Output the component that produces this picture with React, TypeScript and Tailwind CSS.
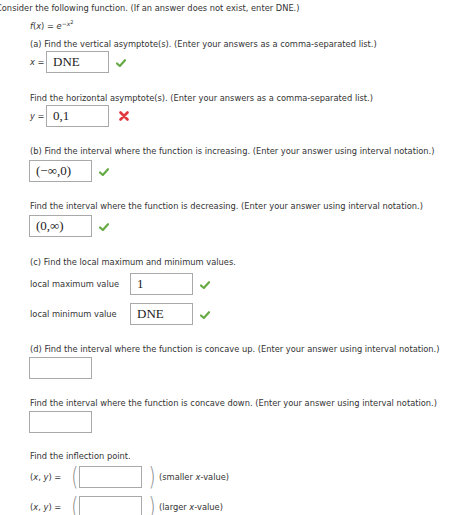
import React from 'react';

const font = { fontFamily: '"DejaVu Sans", Verdana, sans-serif' };

function Check() {
  return (
    <svg width="10" height="8" viewBox="0 0 10 8" className="shrink-0">
      <path d="M1 4.5 L3.8 7 L9 1.2" fill="none" stroke="#66aa44" strokeWidth="2.2" strokeLinejoin="round" strokeLinecap="round" />
    </svg>
  );
}

function Cross() {
  return (
    <svg width="10" height="10" viewBox="0 0 10 10" className="shrink-0">
      <path d="M1.5 1.5 L8.5 8.5 M8.5 1.5 L1.5 8.5" stroke="#e0383e" strokeWidth="2.6" strokeLinecap="round" />
    </svg>
  );
}

function Box({ value }: { value?: React.ReactNode }) {
  return (
    <div className="w-[63px] h-[22px] shrink-0 border border-[#a9a9a9] bg-white flex items-center px-[6px] text-[13px] text-[#222] font-['Liberation_Serif',serif]">
      {value}
    </div>
  );
}

function Line({ children, className = '' }: { children: React.ReactNode; className?: string }) {
  return <div className={`text-[8.3px] leading-[11px] text-[#333] whitespace-nowrap ${className}`}>{children}</div>;
}

// tall thin brackets around the inflection point box
function Paren({ children, className = '' }: { children: React.ReactNode; className?: string }) {
  return (
    <span className={`text-[24px] leading-none text-[#888] font-light font-['DejaVu_Sans',sans-serif] scale-x-75 ${className}`}>{children}</span>
  );
}

export default function App() {
  return (
    <div className="w-[474px] h-[515px] overflow-hidden bg-white" style={font}>
      <div className="pt-[3px]">
        <Line className="-ml-[4px]">Consider the following function. (If an answer does not exist, enter DNE.)</Line>
        <div className="pl-[30px]">
          <Line className="mt-[7px]">
            <i>f</i>(<i>x</i>) = <i>e</i><sup className="text-[6px]">−<i>x</i><sup className="text-[5px]">2</sup></sup>
          </Line>
          <Line className="mt-[7px]">(a) Find the vertical asymptote(s). (Enter your answers as a comma-separated list.)</Line>
          <div className="flex items-center mt-[1px]">
            <span className="text-[8.3px] text-[#333] w-[16px]"><i>x</i> =</span>
            <Box value="DNE" />
            <span className="ml-[7px] mt-[1px]"><Check /></span>
          </div>

          <Line className="mt-[20px]">Find the horizontal asymptote(s). (Enter your answers as a comma-separated list.)</Line>
          <div className="flex items-center mt-[1px]">
            <span className="text-[8.3px] text-[#333] w-[16px]"><i>y</i> =</span>
            <Box value="0,1" />
            <span className="ml-[10px]"><Cross /></span>
          </div>
        </div>

        <div className="pl-[29px]">
          <Line className="mt-[19px] ml-[1px]">(b) Find the interval where the function is increasing. (Enter your answer using interval notation.)</Line>
          <div className="flex items-center mt-[3px]">
            <Box value="(−∞,0)" />
            <span className="ml-[7px] mt-[2px]"><Check /></span>
          </div>

          <Line className="mt-[19px] ml-[1px]">Find the interval where the function is decreasing. (Enter your answer using interval notation.)</Line>
          <div className="flex items-center mt-[3px]">
            <Box value="(0,∞)" />
            <span className="ml-[7px] mt-[2px]"><Check /></span>
          </div>

          <Line className="mt-[20px] ml-[1px]">(c) Find the local maximum and minimum values.</Line>
          <div className="flex items-center mt-[5px] ml-[1px]">
            <span className="text-[8.3px] text-[#333] w-[100px]">local maximum value</span>
            <Box value="1" />
            <span className="ml-[7px] mt-[2px]"><Check /></span>
          </div>
          <div className="flex items-center mt-[8px] ml-[1px]">
            <span className="text-[8.3px] text-[#333] w-[100px]">local minimum value</span>
            <Box value="DNE" />
            <span className="ml-[7px] mt-[2px]"><Check /></span>
          </div>

          <Line className="mt-[19px] ml-[1px]">(d) Find the interval where the function is concave up. (Enter your answer using interval notation.)</Line>
          <div className="mt-[2px]">
            <Box />
          </div>

          <Line className="mt-[19px] ml-[1px]">Find the interval where the function is concave down. (Enter your answer using interval notation.)</Line>
          <div className="mt-[2px]">
            <Box />
          </div>

          <Line className="mt-[18px] ml-[1px]">Find the inflection point.</Line>
          <div className="flex items-center mt-[3px] ml-[1px]">
            <span className="text-[8.3px] text-[#333] w-[40px]">(<i>x</i>, <i>y</i>) =</span>
            <Paren className="w-[9px]">(</Paren>
            <Box />
            <Paren className="ml-[5px] w-[12px]">)</Paren>
            <span className="text-[8.3px] text-[#333]">(smaller <i>x</i>-value)</span>
          </div>
          <div className="flex items-center mt-[6px] ml-[1px]">
            <span className="text-[8.3px] text-[#333] w-[40px]">(<i>x</i>, <i>y</i>) =</span>
            <Paren className="w-[9px]">(</Paren>
            <Box />
            <Paren className="ml-[5px] w-[12px]">)</Paren>
            <span className="text-[8.3px] text-[#333]">(larger <i>x</i>-value)</span>
          </div>
        </div>
      </div>
    </div>
  );
}
